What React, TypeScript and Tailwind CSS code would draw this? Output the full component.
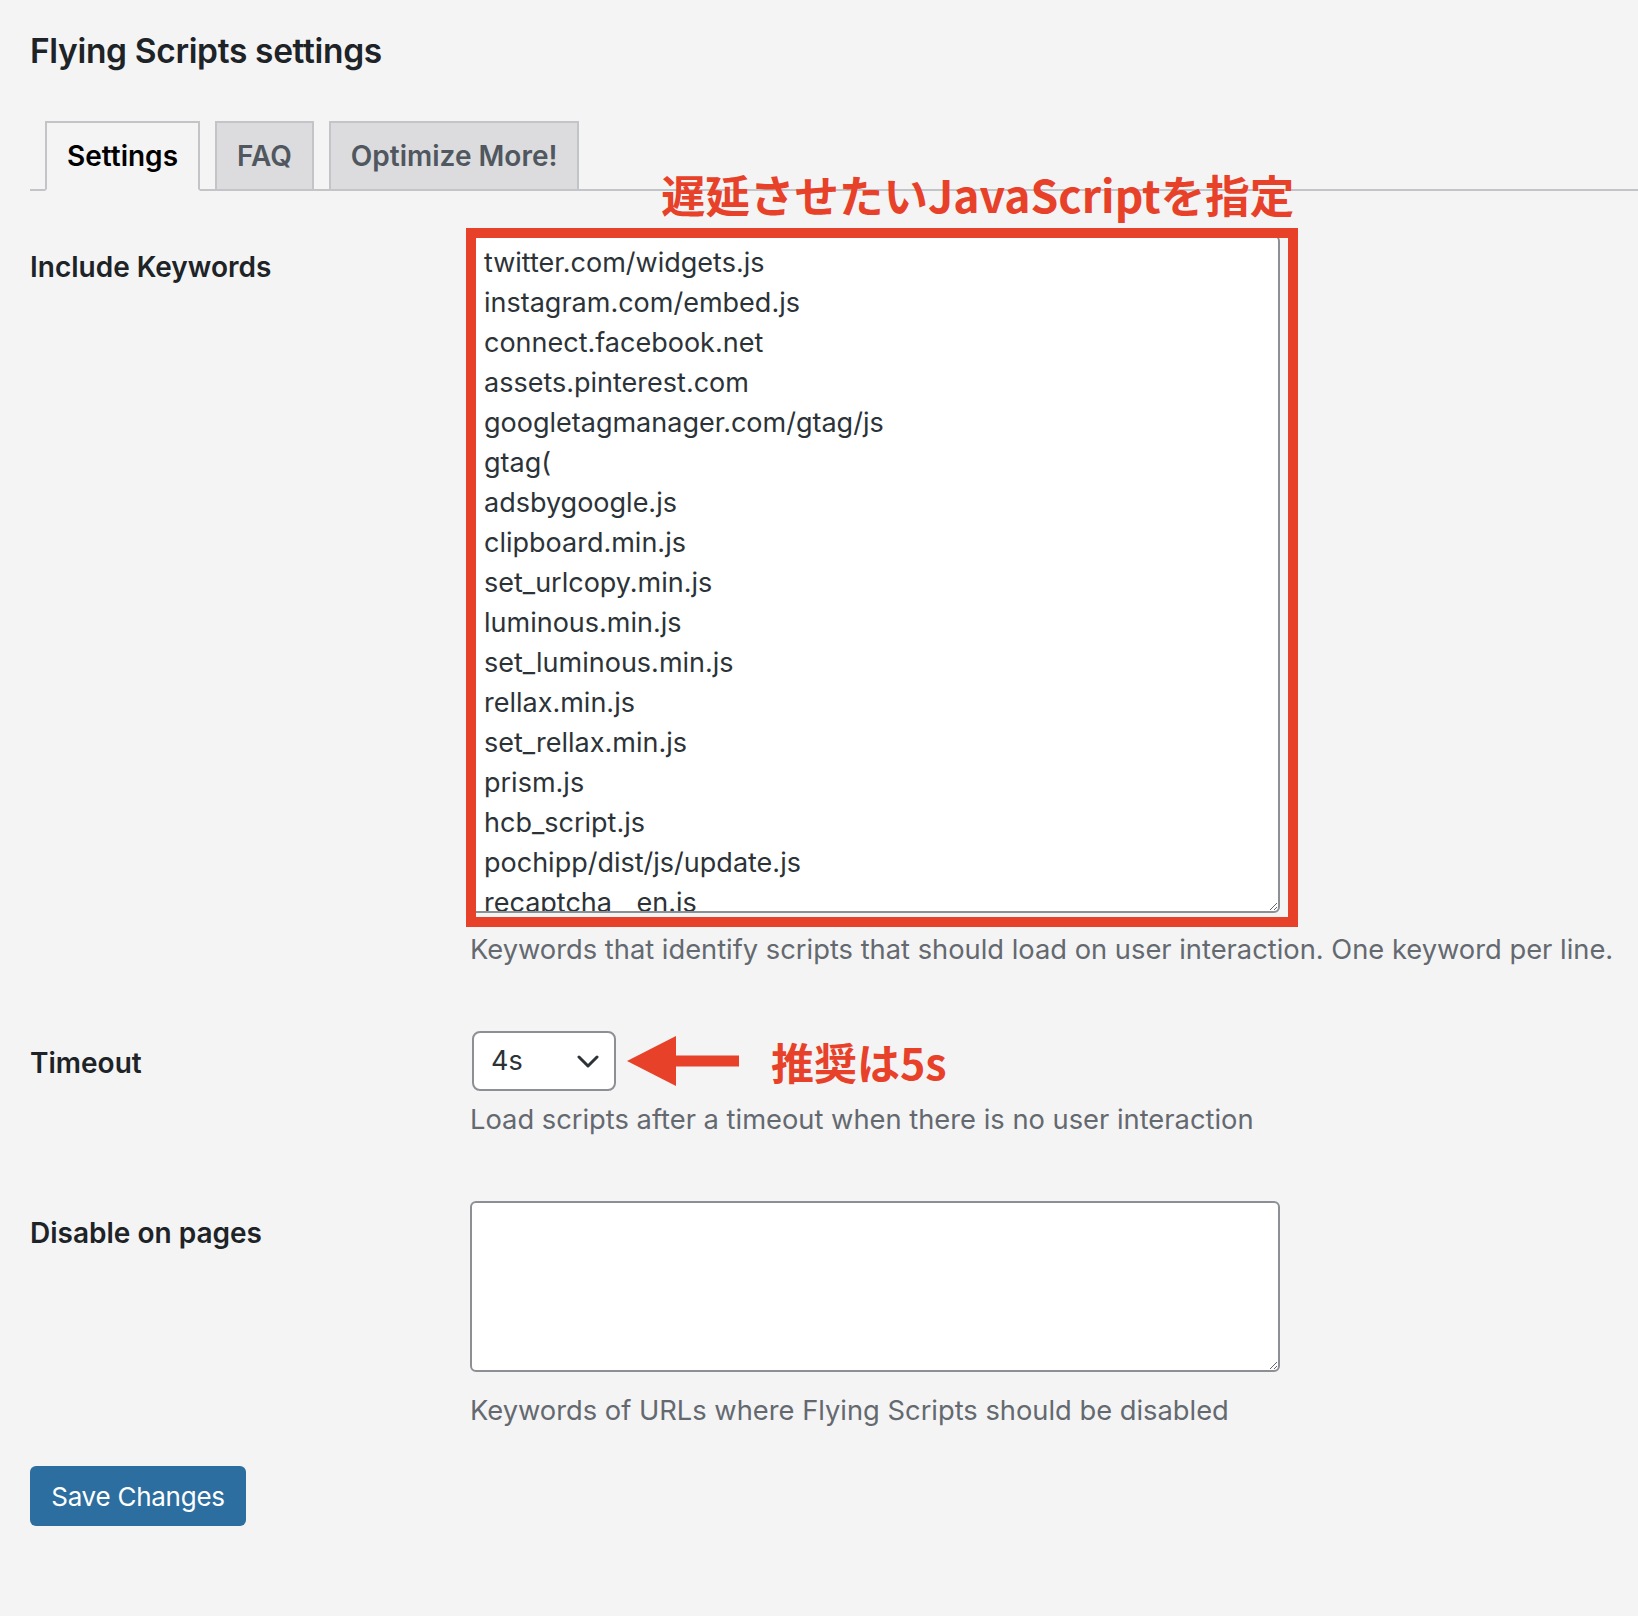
import React from "react";

const keywords = [
  "twitter.com/widgets.js",
  "instagram.com/embed.js",
  "connect.facebook.net",
  "assets.pinterest.com",
  "googletagmanager.com/gtag/js",
  "gtag(",
  "adsbygoogle.js",
  "clipboard.min.js",
  "set_urlcopy.min.js",
  "luminous.min.js",
  "set_luminous.min.js",
  "rellax.min.js",
  "set_rellax.min.js",
  "prism.js",
  "hcb_script.js",
  "pochipp/dist/js/update.js",
  "recaptcha__en.js",
  "recaptcha/api.js",
];

function Tab({ label, active }: { label: string; active?: boolean }) {
  return (
    <div
      className={
        active
          ? "h-[70px] px-[20px] -mb-[2px] flex items-center border-2 border-[#c3c4c7] border-b-[#f4f4f4] bg-[#f4f4f4] text-black"
          : "h-[68px] px-[20px] flex items-center border-2 border-b-0 border-[#c3c4c7] bg-[#dcdcde] text-[#50575e]"
      }
    >
      <span className="text-[28px] font-semibold leading-none">{label}</span>
    </div>
  );
}

function Row({
  label,
  children,
}: {
  label: string;
  children: React.ReactNode;
}) {
  return (
    <div className="flex">
      <div className="w-[440px] shrink-0 pt-[14px]">
        <span className="block text-[28px] leading-[36px] font-semibold text-[#1d2327]">
          {label}
        </span>
      </div>
      <div className="flex-1 min-w-0">{children}</div>
    </div>
  );
}

function Chevron() {
  return (
    <svg width="22" height="13" viewBox="0 0 22 13" fill="none">
      <path
        d="M2 2l9 9 9-9"
        stroke="#2c3338"
        strokeWidth="3"
        strokeLinecap="round"
        strokeLinejoin="round"
      />
    </svg>
  );
}

function Arrow() {
  return (
    <svg width="112" height="50" viewBox="0 0 112 50">
      <polygon points="0,25 49,0 49,50" fill="#e8412a" />
      <rect x="47" y="19.5" width="65" height="11" fill="#e8412a" />
    </svg>
  );
}

export default function App() {
  return (
    <div className="min-h-screen bg-[#f4f4f4] font-['Inter','Liberation_Sans',sans-serif]">
      <div className="pl-[30px] pt-[29px] pb-[80px]">
        <h2 className="text-[33.5px] leading-[44px] font-semibold text-[#1d2327] tracking-[-0.01em]">
          Flying Scripts settings
        </h2>

        <div className="mt-[48px] flex items-end gap-[15px] pl-[15px] border-b-2 border-[#c3c4c7]">
          <Tab label="Settings" active />
          <Tab label="FAQ" />
          <Tab label="Optimize More!" />
        </div>

        <div className="mt-[44px]">
          <Row label="Include Keywords">
            <div className="relative w-[810px]">
              <span className="absolute left-[191px] -top-[63px] whitespace-nowrap text-[44.5px] leading-none font-bold text-[#e8412a] font-['Noto_Sans_CJK_JP',sans-serif]">
                遅延させたいJavaScriptを指定
              </span>
              <textarea
                readOnly
                defaultValue={keywords.join("\n")}
                className="block w-[810px] h-[678px] overflow-hidden bg-white border-2 border-[#8c8f94] rounded-[6px] px-[12px] pt-[6px] pb-[4px] text-[27px] leading-[40px] text-[#2c3338] outline-none resize-y"
              />
              <div className="absolute -left-[4px] -right-[18px] -top-[7px] -bottom-[14px] border-[10px] border-[#e8412a] pointer-events-none" />
            </div>
            <p className="mt-[17px] text-[27.3px] leading-[40px] text-[#646970] whitespace-nowrap">
              Keywords that identify scripts that should load on user interaction. One keyword per line.
            </p>
          </Row>

          <div className="mt-[61px]">
            <Row label="Timeout">
              <div className="flex items-center">
                <div className="ml-[2px] w-[144px] h-[60px] flex items-center justify-between pl-[17px] pr-[15px] bg-white border-2 border-[#8c8f94] rounded-[8px]">
                  <span className="text-[27px] text-[#2c3338]">4s</span>
                  <Chevron />
                </div>
                <div className="ml-[11px]">
                  <Arrow />
                </div>
                <span className="ml-[32px] text-[43px] leading-none font-bold text-[#e8412a] font-['Noto_Sans_CJK_JP',sans-serif]">
                  推奨は5s
                </span>
              </div>
              <p className="mt-[9px] text-[27.3px] leading-[40px] text-[#646970]">
                Load scripts after a timeout when there is no user interaction
              </p>
            </Row>
          </div>

          <div className="mt-[61px]">
            <Row label="Disable on pages">
              <textarea
                readOnly
                className="block w-[810px] h-[171px] overflow-hidden bg-white border-2 border-[#8c8f94] rounded-[6px] px-[12px] py-[4px] text-[27px] leading-[40px] outline-none resize-y"
              />
              <p className="mt-[19px] text-[27.3px] leading-[40px] text-[#646970]">
                Keywords of URLs where Flying Scripts should be disabled
              </p>
            </Row>
          </div>
        </div>

        <button className="mt-[35px] w-[216px] h-[60px] rounded-[6px] bg-[#2c6e9f] text-white text-[26px] tracking-[-0.01em]">
          Save Changes
        </button>
      </div>
    </div>
  );
}
